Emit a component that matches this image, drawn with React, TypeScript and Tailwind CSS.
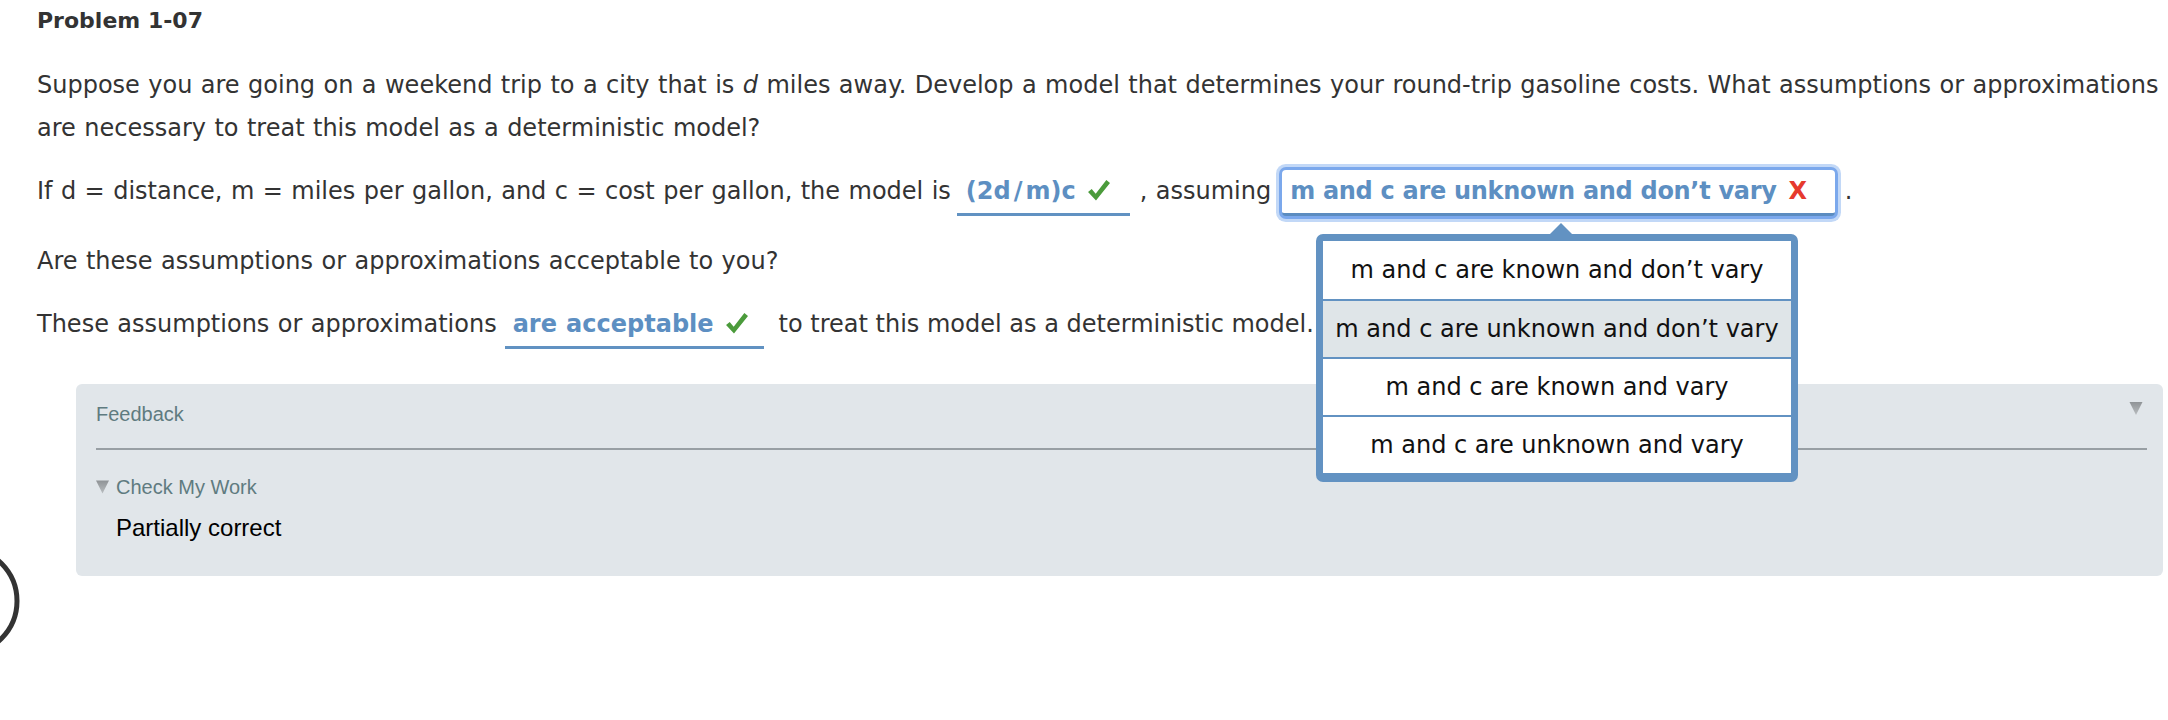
import React from "react";

const options = [
  "m and c are known and don’t vary",
  "m and c are unknown and don’t vary",
  "m and c are known and vary",
  "m and c are unknown and vary",
];

function Check() {
  return (
    <svg viewBox="0 0 22 22" className="ml-[11px] inline-block h-[23px] w-[23px] align-[-3px]">
      <polygon points="1,12.5 4.5,9.5 8.3,14 18.5,1 22,3.8 8.6,20.5" fill="#4b9b3b" />
    </svg>
  );
}

function Tri({ className }: { className?: string }) {
  return (
    <svg viewBox="0 0 14 14" className={className}>
      <defs>
        <linearGradient id="tg" x1="0" y1="0" x2="0" y2="1">
          <stop offset="0" stopColor="#8f9396" />
          <stop offset="1" stopColor="#b9bdc0" />
        </linearGradient>
      </defs>
      <polygon points="0,0 14,0 7,14" fill="url(#tg)" />
    </svg>
  );
}

export default function App() {
  return (
    <div className="relative w-[2168px] h-[720px] overflow-hidden bg-white text-[#333] [font-family:'DejaVu_Sans',Verdana,sans-serif]">
      <div className="pl-[37px]">
        <h1 className="pt-[6px] text-[22px] leading-[30px] font-bold">Problem 1-07</h1>

        <p className="mt-[28px] text-[24px] leading-[43px] whitespace-nowrap [word-spacing:0.8px]">
          Suppose you are going on a weekend trip to a city that is <i>d</i> miles away. Develop a model that
          determines your round-trip gasoline costs. What assumptions or approximations
          <br />
          are necessary to treat this model as a deterministic model?
        </p>

        {/* model line */}
        <div className="mt-[20px] text-[24px] leading-[43px] whitespace-nowrap [word-spacing:0.8px]">
          If d = distance, m = miles per gallon, and c = cost per gallon, the model is
          <span className="ml-[6px] inline-block align-top border-b-[3px] border-[#6192c2] pl-[9px] pr-[20px] font-bold text-[#5d8fc2] [word-spacing:0]">
            (2d<span className="px-[3px]">/</span>m)c
            <Check />
          </span>
          <span className="ml-[10px]">, assuming</span>
          <span className="ml-[11px] inline-block align-top rounded-[4px] border-b-[3px] border-[#5b8cc0] bg-white pl-[8px] pr-[28px] font-bold tracking-[-0.3px] text-[#5d8fc2] [word-spacing:0] shadow-[0_0_0_3px_#7ba8ec,0_0_0_6px_#c2d8f7]">
            m and c are unknown and don’t vary
            <span className="ml-[12px] text-[#e63a2e]">X</span>
          </span>
          <span className="ml-[10px]">.</span>
        </div>

        <div className="mt-[24px] text-[24px] leading-[43px] whitespace-nowrap [word-spacing:0.8px]">
          Are these assumptions or approximations acceptable to you?
        </div>

        <div className="mt-[20px] text-[24px] leading-[43px] whitespace-nowrap [word-spacing:0.8px]">
          These assumptions or approximations
          <span className="ml-[8px] inline-block align-top border-b-[3px] border-[#6192c2] pl-[8px] pr-[16px] font-bold text-[#5d8fc2]">
            are acceptable
            <Check />
          </span>
          <span className="ml-[15px] [word-spacing:0]">to treat this model as a deterministic model.</span>
        </div>
      </div>

      {/* feedback panel */}
      <div className="mt-[35px] ml-[76px] mr-[5px] rounded-[6px] bg-[#e1e6ea] pl-[20px] pr-[16px] pt-[18px] pb-[34px] [font-family:'Liberation_Sans',Arial,sans-serif]">
        <div className="flex items-start justify-between">
          <span className="text-[20px] leading-[24px] text-[#5f7b80]">Feedback</span>
          <Tri className="mr-[4px] h-[13px] w-[14px]" />
        </div>
        <div className="mt-[22px] h-[2px] bg-[#989fa4]" />
        <div className="mt-[25px] flex items-center gap-[7px] text-[20px] leading-[24px] text-[#5f7b80]">
          <Tri className="h-[14px] w-[13px]" />
          <span>Check My Work</span>
        </div>
        <div className="mt-[15px] pl-[20px] text-[24px] leading-[28px] text-black">Partially correct</div>
      </div>

      {/* dropdown menu */}
      <svg className="absolute left-[1549px] top-[223px] h-[12px] w-[24px]" viewBox="0 0 24 12">
        <polygon points="12,0 24,12 0,12" fill="#6292c2" />
      </svg>
      <div className="absolute left-[1316px] top-[234px] w-[482px] overflow-hidden rounded-[7px] border-[7px] border-b-[9px] border-[#6292c2] bg-white text-[24px] text-[#111]">
        {options.map((o, i) => (
          <div
            key={o}
            className={
              "flex h-[58px] items-center justify-center whitespace-nowrap" +
              (i > 0 ? " border-t-2 border-[#6292c2]" : "") +
              (i === 1 ? " bg-[#dfe5e8]" : "")
            }
          >
            {o}
          </div>
        ))}
      </div>

      {/* partial circle at page edge */}
      <svg className="absolute left-0 top-[541px] h-[120px] w-[30px]" viewBox="0 0 30 120">
        <circle cx="-36" cy="60" r="53" fill="none" stroke="#333" strokeWidth="5" />
      </svg>
    </div>
  );
}
